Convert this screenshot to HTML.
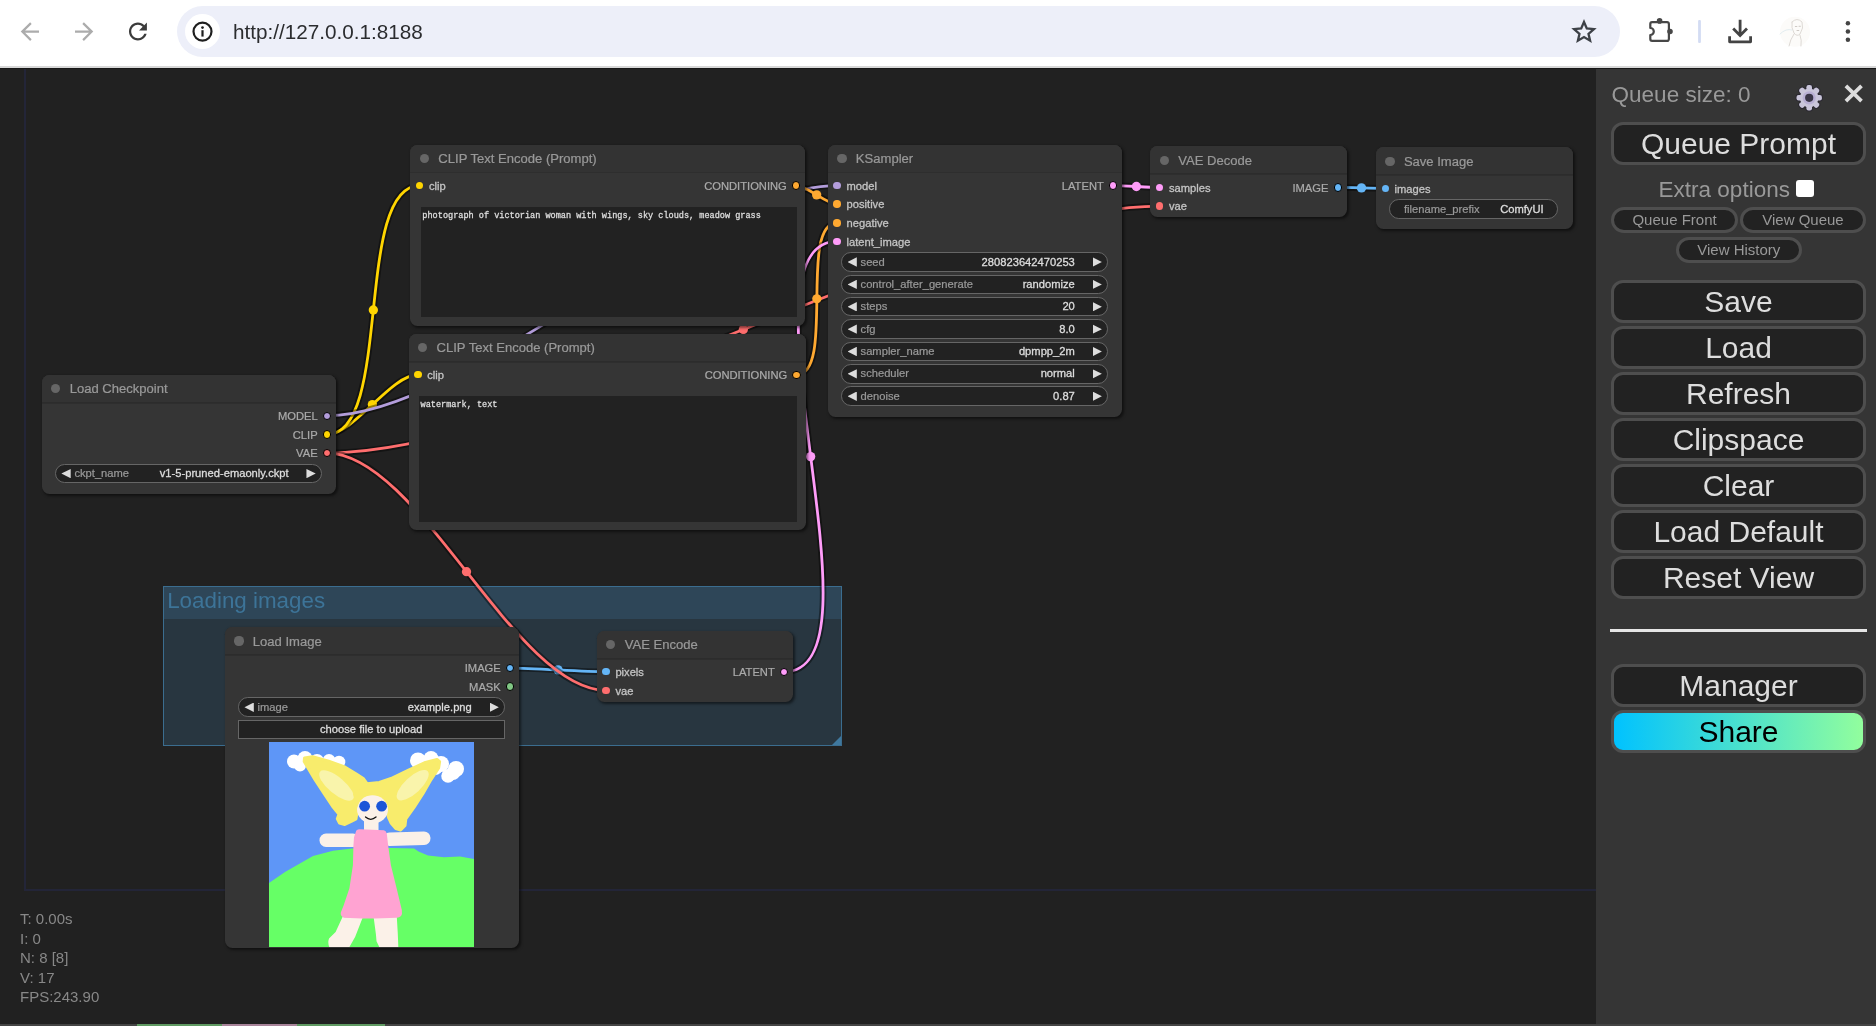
<!DOCTYPE html>
<html lang="en"><head><meta charset="utf-8"><title>ComfyUI</title>
<style>
html,body{margin:0;padding:0}
body{width:1876px;height:1026px;overflow:hidden;position:relative;background:#212121;
 font-family:"Liberation Sans",sans-serif}
.t{position:absolute;white-space:nowrap;line-height:1;display:block}
i{display:block;position:absolute;font-style:normal}
/* ---------- browser chrome ---------- */
#chrome{position:absolute;left:0;top:0;width:1876px;height:66px;background:#fff;border-bottom:2px solid #d8d8d8;box-shadow:0 1px 0 #171717;z-index:30}
#omni{position:absolute;left:177px;top:6px;width:1443px;height:51px;border-radius:26px;background:#edeff9}
#omni .site{position:absolute;left:8px;top:8px;width:35px;height:35px;border-radius:50%;background:#fff}
#chrome svg{position:absolute;overflow:visible}
#url{position:absolute;left:56.2px;top:15.700px;font-size:20.7px;line-height:1;color:#2b2c2f;white-space:nowrap;will-change:transform}
/* ---------- canvas ---------- */
#graph{position:absolute;left:0;top:68px;width:1876px;height:958px;overflow:hidden;background:#212121}
#world{position:absolute;left:0;top:-68px;width:1876px;height:1026px;will-change:transform}
#world .t{-webkit-text-stroke:0.22px currentColor}
#world .v{-webkit-text-stroke:0.3px currentColor}
#world .gt{-webkit-text-stroke:0}
#links{position:absolute;left:0;top:0;overflow:visible}
.edge{position:absolute;background:#232538}
.group{position:absolute;box-sizing:border-box;border:0.93px solid rgba(63,120,158,.85);background:rgba(63,120,158,.25)}
.ghead{position:absolute;left:0;top:0;right:0;background:rgba(63,120,158,.25)}
.gcorner{right:0;bottom:0;width:0;height:0;border-style:solid;border-color:transparent transparent #3f789e transparent}
.node{position:absolute;background:#353535;border-radius:7.46px;box-shadow:1.86px 1.86px 2.8px rgba(0,0,0,.5)}
.node header{position:absolute;left:0;top:0;right:0;background:#333;border-radius:7.46px 7.46px 0 0}
.tdot{left:9.32px;top:9.32px;width:9.32px;height:9.32px;border-radius:50%;background:#666}
.sep{left:0;right:0;height:1.86px;background:rgba(0,0,0,.13)}
.sd{width:7.46px;height:7.46px;border-radius:50%}
.so{box-sizing:border-box;width:8.39px;height:8.39px;border:0.93px solid #000}
.w{position:absolute;box-sizing:border-box;border:0.93px solid #666;background:#222;border-radius:9.8px}
.w.btn{border-radius:0}
.al,.ar{top:4.2px;width:9.32px;height:9.32px;background:#ddd}
.al{left:5.1px;clip-path:polygon(100% 0,0 50%,100% 100%)}
.ar{right:5.1px;clip-path:polygon(0 0,100% 50%,0 100%)}
.ta{position:absolute;box-sizing:border-box;background:#222;color:#ddd;-webkit-text-stroke:0.3px #ddd;font-family:"Liberation Mono",monospace;
 font-size:8.55px;line-height:11px;padding:4.1px 0 0 1.7px;white-space:nowrap;overflow:hidden}
.pic{position:absolute;display:block}
#stats{position:absolute;left:20px;top:909.4px;font-size:15px;line-height:19.47px;color:#888;white-space:nowrap}
#strip{position:absolute;left:0;top:1024px;width:1876px;height:2px;background:#444;z-index:25}
#strip i{top:0;height:2px}
/* ---------- side menu ---------- */
#menu{position:absolute;left:1596px;top:68px;width:280px;height:958px;background:#353535;z-index:20;color:#999}
#menu button{position:absolute;box-sizing:border-box;margin:0;padding:0;font-family:"Liberation Sans",sans-serif;
 background:#222;color:#ddd;border:3px solid #4e4e4e;border-radius:12px;font-size:30px;line-height:34px;text-align:center;
 left:15px;width:255px;height:43px}
#menu button.sm{font-size:15px;line-height:20px;height:26px;color:#999;border-width:3px;border-radius:13px}
#menu hr{position:absolute;left:14px;top:561.2px;width:257px;height:2.400px;margin:0;border:0;background:#e6e6e6}
#menu svg{position:absolute;overflow:visible}
#mi{position:absolute;left:0;top:0;width:280px;height:958px;will-change:transform}
</style></head>
<body>
<div id="chrome">
<svg width="1876" height="66" viewBox="0 0 1876 66" fill="none">
 <g stroke="#acacac" stroke-width="2.2" stroke-linecap="butt" stroke-linejoin="miter">
  <path d="M39 31.6H22.6M30.9 23.1L22.3 31.6L30.9 40.1"/>
  <path d="M75 31.6H91.4M83.1 23.1L91.7 31.6L83.1 40.1"/>
 </g>
 <path transform="translate(124.5 18.1) scale(1.12)" fill="#3b3b3b" d="M17.65 6.35C16.2 4.9 14.21 4 12 4c-4.42 0-7.99 3.58-7.99 8s3.57 8 7.99 8c3.73 0 6.84-2.55 7.73-6h-2.08c-.82 2.33-3.04 4-5.65 4-3.31 0-6-2.69-6-6s2.69-6 6-6c1.66 0 3.14.69 4.22 1.78L13 11h7V4l-2.35 2.35z"/>
</svg>
<div id="omni"><span class="site"></span>
 <svg width="1443" height="51" viewBox="177 6 1443 51" style="left:0;top:0" fill="none">
  <circle cx="202.5" cy="31.6" r="9" stroke="#1f1f1f" stroke-width="2.2"/>
  <circle cx="202.5" cy="27.6" r="1.35" fill="#1f1f1f"/>
  <path d="M202.5 30.2V36.6" stroke="#1f1f1f" stroke-width="2.2"/>
  <path stroke="#3d4147" stroke-width="2.3" stroke-linejoin="miter" d="M1584 22L1586.8 28.500L1593.9 29.1L1588.5 33.8L1590.1 40.7L1584 37L1577.9 40.7L1579.5 33.8L1574.1 29.1L1581.2 28.5Z"/>
 </svg>
 <span id="url">http://127.0.0.1:8188</span>
</div>
<svg width="1876" height="66" viewBox="0 0 1876 66" fill="none">
 <g stroke="#474747" stroke-width="2.2" stroke-linejoin="round">
  <path d="M1652.1 22.1H1667.1A1.8 1.8 0 0 1 1668.9 23.9V39.100A1.8 1.8 0 0 1 1667.1 40.9H1652.1A1.8 1.8 0 0 1 1650.300 39.1V35A3.5 3.5 0 0 0 1650.3 28V23.9A1.8 1.8 0 0 1 1652.1 22.1Z"/>
  <circle cx="1659.6" cy="20.9" r="1.7" fill="#474747"/><circle cx="1670" cy="31.5" r="1.7" fill="#474747"/>
 </g>
 <rect x="1698.1" y="20" width="2.8" height="23" rx="1" fill="#d3dcf3"/>
 <g stroke="#444" stroke-width="2.8" stroke-linejoin="miter">
  <path d="M1729.6 36.300V41.8H1750.6V36.3" stroke-linejoin="round"/>
  <path d="M1740.1 19.7V35.400M1733.2 28.6L1740.1 35.6L1747 28.6"/>
 </g>
 <circle cx="1795" cy="31.8" r="15" fill="#fcfbf9"/>
 <g stroke="#d9d5d0" stroke-width="0.9" stroke-linecap="round">
  <path d="M1792 22Q1797 17 1802 22Q1804 28 1800 34Q1797 37 1794 33Q1791 28 1792 22"/>
  <path d="M1794 34Q1790 40 1789 46M1800 35Q1802 40 1801 46"/>
  <path d="M1780 34Q1786 28 1792 30" stroke="#dfeaee"/>
  <path d="M1795.300 26.5h1.6M1799 26.3h1.400M1797 30.5h1.8" stroke="#c9c4be"/>
 </g>
 <g fill="#444"><circle cx="1847.9" cy="23.2" r="2.25"/><circle cx="1847.9" cy="31.5" r="2.25"/><circle cx="1847.9" cy="39.7" r="2.25"/></g>
</svg>
</div>
<div id="graph"><div id="world">
<i class="edge" style="left:24px;top:0;width:1.6px;height:890.6px"></i>
<i class="edge" style="left:24px;top:889.4px;width:1600px;height:1.6px"></i>
<div class="group" style="left:163.4px;top:586.31px;width:678.13px;height:159.77px"><div class="ghead" style="height:31.32px"></div><span class="t gt" style="left:2.8px;top:2.43px;font-size:22.37px;color:#3d7498">Loading images</span><i class="gcorner" style="border-width:0 0 9.32px 9.32px"></i></div>
<svg id="links" width="1876" height="1026" viewBox="0 0 1876 1026" fill="none" stroke-linecap="butt" stroke-linejoin="round">
<path d="M326.97 434.39C354.14 434.39 390.66 374.75 417.84 374.75" stroke="rgba(0,0,0,.42)" stroke-width="6.52"/>
<path d="M326.97 434.39C354.14 434.39 390.66 374.75 417.84 374.75" stroke="#FFD500" stroke-width="2.8"/>
<circle cx="372.4" cy="404.57" r="4.66" fill="#FFD500"/>
<path d="M326.97 434.39C393.36 434.39 353.31 185.55 419.7 185.55" stroke="rgba(0,0,0,.42)" stroke-width="6.52"/>
<path d="M326.97 434.39C393.36 434.39 353.31 185.55 419.7 185.55" stroke="#FFD500" stroke-width="2.8"/>
<circle cx="373.33" cy="309.97" r="4.66" fill="#FFD500"/>
<path d="M1113.11 185.55C1124.77 185.55 1148.05 187.41 1159.71 187.41" stroke="rgba(0,0,0,.42)" stroke-width="6.52"/>
<path d="M1113.11 185.55C1124.77 185.55 1148.05 187.41 1159.71 187.41" stroke="#FF9CF9" stroke-width="2.8"/>
<circle cx="1136.41" cy="186.48" r="4.66" fill="#FF9CF9"/>
<path d="M326.97 453.03C544.11 453.03 942.56 206.05 1159.71 206.05" stroke="rgba(0,0,0,.42)" stroke-width="6.52"/>
<path d="M326.97 453.03C544.11 453.03 942.56 206.05 1159.71 206.05" stroke="#FF6E6E" stroke-width="2.8"/>
<circle cx="743.34" cy="329.54" r="4.66" fill="#FF6E6E"/>
<path d="M1337.72 187.41C1349.61 187.41 1373.37 188.35 1385.25 188.35" stroke="rgba(0,0,0,.42)" stroke-width="6.52"/>
<path d="M1337.72 187.41C1349.61 187.41 1373.37 188.35 1385.25 188.35" stroke="#64B5F6" stroke-width="2.8"/>
<circle cx="1361.49" cy="187.88" r="4.66" fill="#64B5F6"/>
<path d="M510.09 668.03C534.1 668.03 582.06 671.76 606.08 671.76" stroke="rgba(0,0,0,.42)" stroke-width="6.52"/>
<path d="M510.09 668.03C534.1 668.03 582.06 671.76 606.08 671.76" stroke="#64B5F6" stroke-width="2.8"/>
<circle cx="558.08" cy="669.89" r="4.66" fill="#64B5F6"/>
<path d="M326.97 453.03C418.56 453.03 514.48 690.4 606.08 690.4" stroke="rgba(0,0,0,.42)" stroke-width="6.52"/>
<path d="M326.97 453.03C418.56 453.03 514.48 690.4 606.08 690.4" stroke="#FF6E6E" stroke-width="2.8"/>
<circle cx="466.52" cy="571.71" r="4.66" fill="#FF6E6E"/>
<path d="M326.97 415.75C466.91 415.75 697.29 185.55 837.24 185.55" stroke="rgba(0,0,0,.42)" stroke-width="6.52"/>
<path d="M326.97 415.75C466.91 415.75 697.29 185.55 837.24 185.55" stroke="#B39DDB" stroke-width="2.8"/>
<circle cx="582.1" cy="300.65" r="4.66" fill="#B39DDB"/>
<path d="M796.09 185.55C807.38 185.55 825.94 204.19 837.24 204.19" stroke="rgba(0,0,0,.42)" stroke-width="6.52"/>
<path d="M796.09 185.55C807.38 185.55 825.94 204.19 837.24 204.19" stroke="#FFA931" stroke-width="2.8"/>
<circle cx="816.66" cy="194.87" r="4.66" fill="#FFA931"/>
<path d="M796.49 374.75C835.81 374.75 797.91 222.83 837.24 222.83" stroke="rgba(0,0,0,.42)" stroke-width="6.52"/>
<path d="M796.49 374.75C835.81 374.75 797.91 222.83 837.24 222.83" stroke="#FFA931" stroke-width="2.8"/>
<circle cx="816.86" cy="298.79" r="4.66" fill="#FFA931"/>
<path d="M784.09 671.76C892.48 671.76 728.85 241.47 837.24 241.47" stroke="rgba(0,0,0,.42)" stroke-width="6.52"/>
<path d="M784.09 671.76C892.48 671.76 728.85 241.47 837.24 241.47" stroke="#FF9CF9" stroke-width="2.8"/>
<circle cx="810.66" cy="456.61" r="4.66" fill="#FF9CF9"/>
</svg>
<section class="node" style="left:408.52px;top:333.74px;width:397.29px;height:196.29px">
<header style="height:27.96px"><i class="tdot"></i><span class="t " style="left:27.96px;top:7.59px;font-size:13.05px;color:#999;">CLIP Text Encode (Prompt)</span></header>
<i class="sep" style="top:27.03px"></i>
<i class="sd" style="left:5.59px;top:37.28px;background:#FFD500"></i>
<span class="t v" style="left:18.64px;top:36.2px;font-size:11.18px;color:#c4c4c4;">clip</span>
<i class="sd so" style="left:383.78px;top:36.81px;background:#FFA931"></i>
<span class="t " style="right:18.64px;top:36.2px;font-size:11.18px;color:#aaa;">CONDITIONING</span>
<div class="ta" style="left:10.3px;top:62.44px;width:378.39px;height:125.64px">watermark, text</div>
</section>
<section class="node" style="left:410.38px;top:144.54px;width:395.03px;height:181.1px">
<header style="height:27.96px"><i class="tdot"></i><span class="t " style="left:27.96px;top:7.59px;font-size:13.05px;color:#999;">CLIP Text Encode (Prompt)</span></header>
<i class="sep" style="top:27.03px"></i>
<i class="sd" style="left:5.59px;top:37.28px;background:#FFD500"></i>
<span class="t v" style="left:18.64px;top:36.2px;font-size:11.18px;color:#c4c4c4;">clip</span>
<i class="sd so" style="left:381.51px;top:36.81px;background:#FFA931"></i>
<span class="t " style="right:18.64px;top:36.2px;font-size:11.18px;color:#aaa;">CONDITIONING</span>
<div class="ta" style="left:10.3px;top:62.44px;width:376.13px;height:110.45px">photograph of victorian woman with wings, sky clouds, meadow grass</div>
</section>
<section class="node" style="left:1150.39px;top:146.41px;width:196.65px;height:70.83px">
<header style="height:27.96px"><i class="tdot"></i><span class="t " style="left:27.96px;top:7.59px;font-size:13.05px;color:#999;">VAE Decode</span></header>
<i class="sep" style="top:27.03px"></i>
<i class="sd" style="left:5.59px;top:37.28px;background:#FF9CF9"></i>
<span class="t v" style="left:18.64px;top:36.2px;font-size:11.18px;color:#c4c4c4;">samples</span>
<i class="sd" style="left:5.59px;top:55.92px;background:#FF6E6E"></i>
<span class="t v" style="left:18.64px;top:54.84px;font-size:11.18px;color:#c4c4c4;">vae</span>
<i class="sd so" style="left:183.14px;top:36.81px;background:#64B5F6"></i>
<span class="t " style="right:18.64px;top:36.2px;font-size:11.18px;color:#aaa;">IMAGE</span>
</section>
<section class="node" style="left:1375.93px;top:147.34px;width:196.65px;height:82.02px">
<header style="height:27.96px"><i class="tdot"></i><span class="t " style="left:27.96px;top:7.59px;font-size:13.05px;color:#999;">Save Image</span></header>
<i class="sep" style="top:27.03px"></i>
<i class="sd" style="left:5.59px;top:37.28px;background:#64B5F6"></i>
<span class="t v" style="left:18.64px;top:36.2px;font-size:11.18px;color:#c4c4c4;">images</span>
<div class="w" style="left:13.51px;top:51.73px;width:168.69px;height:19.57px"><span class="t " style="left:13.51px;top:3.46px;font-size:11.18px;color:#999;">filename_prefix</span><span class="t v" style="right:13.51px;top:3.46px;font-size:11.18px;color:#ddd;">ComfyUI</span></div>
</section>
<section class="node" style="left:224.89px;top:627.02px;width:294.51px;height:320.61px">
<header style="height:27.96px"><i class="tdot"></i><span class="t " style="left:27.96px;top:7.59px;font-size:13.05px;color:#999;">Load Image</span></header>
<i class="sep" style="top:27.03px"></i>
<i class="sd so" style="left:281px;top:36.81px;background:#64B5F6"></i>
<span class="t " style="right:18.64px;top:36.2px;font-size:11.18px;color:#aaa;">IMAGE</span>
<i class="sd so" style="left:281px;top:55.45px;background:#81C784"></i>
<span class="t " style="right:18.64px;top:54.84px;font-size:11.18px;color:#aaa;">MASK</span>
<div class="w" style="left:13.51px;top:70.37px;width:266.55px;height:19.57px"><i class="al"></i><i class="ar"></i><span class="t " style="left:18.17px;top:3.46px;font-size:11.18px;color:#999;">image</span><span class="t v" style="right:32.15px;top:3.46px;font-size:11.18px;color:#ddd;">example.png</span></div>
<div class="w btn" style="left:13.51px;top:92.73px;width:266.55px;height:19.57px"><span class="t v" style="left:131.88px;transform:translateX(-50%);top:3.46px;font-size:11.18px;color:#ddd;">choose file to upload</span></div>
<svg class="pic" style="left:43.97px;top:114.77px" width="205.04" height="205.04" viewBox="0 0 205 205">
<rect width="205" height="205" fill="#5e96f7"/>
<g fill="#fff">
<circle cx="25" cy="19.5" r="7"/><circle cx="36" cy="16.5" r="7.5"/><circle cx="31" cy="23.5" r="6"/>
<circle cx="48" cy="19" r="7"/><circle cx="60" cy="18.500" r="6.5"/><circle cx="70" cy="20" r="6.3"/><circle cx="64" cy="22" r="5"/>
<circle cx="149" cy="18.500" r="8"/><circle cx="162" cy="16.5" r="7.500"/><circle cx="172" cy="22" r="8"/>
<circle cx="187" cy="27" r="8"/><circle cx="179" cy="34" r="6.8"/><circle cx="184" cy="31" r="7"/><circle cx="166" cy="25" r="8"/>
</g>
<path fill="#66ff66" d="M0 141 L16 130 L30 122 L44 114 L64 108.8 L83 106.5 L122 106 L145 106.5 L149.5 109.4 L159 113.4 L175 115.2 L191 114.6 L205 117 V205 H0Z"/>
<path fill="#f8ec6c" stroke="#f8ec6c" stroke-width="3" stroke-linejoin="round" d="M35.5 16 L43.6 14.8 L59.7 19.2 L75.8 25 L87.3 32 L94.2 36.5 L98 41.7 L110.3 40.5 L122 36.5 L139 28.4 L156.4 20.4 L168 17.5 L170.6 19.6 L169.6 26 L162 37.6 L154 51.5 L145 65.3 L136.8 76.8 L136 83.5 L131.6 88 L126.8 86.6 L122 81 L119.6 75.6 L118 70 L88 70 L87 76.8 L82.7 79.1 L75.8 82.5 L70.5 81 L68.3 76.8 L70 72.2 L64.3 65.3 L55 51.5 L46 37.6 L39 26 L35.2 19.4Z"/>
<ellipse cx="67.5" cy="43.5" rx="21.5" ry="8.2" fill="#f9f4ab" transform="rotate(40 67.5 43.5)"/>
<ellipse cx="143.7" cy="43.2" rx="20.5" ry="8.2" fill="#f9f4ab" transform="rotate(-43 143.7 43.2)"/>
<ellipse cx="103.5" cy="67.5" rx="15.5" ry="14.2" fill="#fbf1e8"/>
<path fill="#f8ec6c" d="M88 66 Q92 52 103.5 53 Q116 52 120 66 L122 50 L100 42 L84 52Z"/>
<rect x="95" y="76" width="14.5" height="14" fill="#fbf1e8"/>
<rect x="50.5" y="91.5" width="40" height="13.5" rx="6.5" fill="#fbf1e8"/>
<rect x="114" y="90" width="47.5" height="13.5" rx="6.5" fill="#fbf1e8" transform="rotate(-1.5 137 97)"/>
<circle cx="95.6" cy="64.2" r="5.4" fill="#1b55d8"/><circle cx="112.6" cy="64.2" r="5.4" fill="#1b55d8"/>
<path d="M96.5 75 Q101.7 79.6 107 75" fill="none" stroke="#111" stroke-width="1.3" stroke-linecap="round"/>
<path fill="#fbf1e8" d="M73.5 175 L66.6 190 L60 196.5 Q58.5 201 60.3 205 L80.4 205 L86.2 194.6 L93.5 176Z"/>
<path fill="#fbf1e8" d="M104.6 175 L106.9 192.3 L107.5 199.2 L110.3 205 L129.3 205 L128.8 192.3 L127.8 175Z"/>
<path fill="#ffa3d2" d="M87.3 88.6 Q89 87 91 87.2 L114.9 88.3 Q117.5 89 117.8 91.8 L119.2 104 L121.9 123.2 L127.6 146.3 L132.8 168 Q133.5 172 132 174 Q130 176 127.6 175.8 L105.7 176.4 L93 176.4 L75 175.6 Q71 174 71.8 170.4 L74.6 163.5 L80.4 146.3 L83.9 123.2 L84.4 104 L85 95.2Z"/>
</svg>
</section>
<section class="node" style="left:596.76px;top:630.75px;width:196.65px;height:70.83px">
<header style="height:27.96px"><i class="tdot"></i><span class="t " style="left:27.96px;top:7.59px;font-size:13.05px;color:#999;">VAE Encode</span></header>
<i class="sep" style="top:27.03px"></i>
<i class="sd" style="left:5.59px;top:37.28px;background:#64B5F6"></i>
<span class="t v" style="left:18.64px;top:36.2px;font-size:11.18px;color:#c4c4c4;">pixels</span>
<i class="sd" style="left:5.59px;top:55.92px;background:#FF6E6E"></i>
<span class="t v" style="left:18.64px;top:54.84px;font-size:11.18px;color:#c4c4c4;">vae</span>
<i class="sd so" style="left:183.14px;top:36.81px;background:#FF9CF9"></i>
<span class="t " style="right:18.64px;top:36.2px;font-size:11.18px;color:#aaa;">LATENT</span>
</section>
<section class="node" style="left:827.92px;top:144.54px;width:294.51px;height:272.14px">
<header style="height:27.96px"><i class="tdot"></i><span class="t " style="left:27.96px;top:7.59px;font-size:13.05px;color:#999;">KSampler</span></header>
<i class="sep" style="top:27.03px"></i>
<i class="sd" style="left:5.59px;top:37.28px;background:#B39DDB"></i>
<span class="t v" style="left:18.64px;top:36.2px;font-size:11.18px;color:#c4c4c4;">model</span>
<i class="sd" style="left:5.59px;top:55.92px;background:#FFA931"></i>
<span class="t v" style="left:18.64px;top:54.84px;font-size:11.18px;color:#c4c4c4;">positive</span>
<i class="sd" style="left:5.59px;top:74.56px;background:#FFA931"></i>
<span class="t v" style="left:18.64px;top:73.48px;font-size:11.18px;color:#c4c4c4;">negative</span>
<i class="sd" style="left:5.59px;top:93.2px;background:#FF9CF9"></i>
<span class="t v" style="left:18.64px;top:92.12px;font-size:11.18px;color:#c4c4c4;">latent_image</span>
<i class="sd so" style="left:281px;top:36.81px;background:#FF9CF9"></i>
<span class="t " style="right:18.64px;top:36.2px;font-size:11.18px;color:#aaa;">LATENT</span>
<div class="w" style="left:13.51px;top:107.65px;width:266.55px;height:19.57px"><i class="al"></i><i class="ar"></i><span class="t " style="left:18.17px;top:3.46px;font-size:11.18px;color:#999;">seed</span><span class="t v" style="right:32.15px;top:3.46px;font-size:11.18px;color:#ddd;">280823642470253</span></div>
<div class="w" style="left:13.51px;top:130.01px;width:266.55px;height:19.57px"><i class="al"></i><i class="ar"></i><span class="t " style="left:18.17px;top:3.46px;font-size:11.18px;color:#999;">control_after_generate</span><span class="t v" style="right:32.15px;top:3.46px;font-size:11.18px;color:#ddd;">randomize</span></div>
<div class="w" style="left:13.51px;top:152.38px;width:266.55px;height:19.57px"><i class="al"></i><i class="ar"></i><span class="t " style="left:18.17px;top:3.46px;font-size:11.18px;color:#999;">steps</span><span class="t v" style="right:32.15px;top:3.46px;font-size:11.18px;color:#ddd;">20</span></div>
<div class="w" style="left:13.51px;top:174.75px;width:266.55px;height:19.57px"><i class="al"></i><i class="ar"></i><span class="t " style="left:18.17px;top:3.46px;font-size:11.18px;color:#999;">cfg</span><span class="t v" style="right:32.15px;top:3.46px;font-size:11.18px;color:#ddd;">8.0</span></div>
<div class="w" style="left:13.51px;top:197.12px;width:266.55px;height:19.57px"><i class="al"></i><i class="ar"></i><span class="t " style="left:18.17px;top:3.46px;font-size:11.18px;color:#999;">sampler_name</span><span class="t v" style="right:32.15px;top:3.46px;font-size:11.18px;color:#ddd;">dpmpp_2m</span></div>
<div class="w" style="left:13.51px;top:219.49px;width:266.55px;height:19.57px"><i class="al"></i><i class="ar"></i><span class="t " style="left:18.17px;top:3.46px;font-size:11.18px;color:#999;">scheduler</span><span class="t v" style="right:32.15px;top:3.46px;font-size:11.18px;color:#ddd;">normal</span></div>
<div class="w" style="left:13.51px;top:241.85px;width:266.55px;height:19.57px"><i class="al"></i><i class="ar"></i><span class="t " style="left:18.17px;top:3.46px;font-size:11.18px;color:#999;">denoise</span><span class="t v" style="right:32.15px;top:3.46px;font-size:11.18px;color:#ddd;">0.87</span></div>
</section>
<section class="node" style="left:41.77px;top:374.75px;width:294.51px;height:119.3px">
<header style="height:27.96px"><i class="tdot"></i><span class="t " style="left:27.96px;top:7.59px;font-size:13.05px;color:#999;">Load Checkpoint</span></header>
<i class="sep" style="top:27.03px"></i>
<i class="sd so" style="left:281px;top:36.81px;background:#B39DDB"></i>
<span class="t " style="right:18.64px;top:36.2px;font-size:11.18px;color:#aaa;">MODEL</span>
<i class="sd so" style="left:281px;top:55.45px;background:#FFD500"></i>
<span class="t " style="right:18.64px;top:54.84px;font-size:11.18px;color:#aaa;">CLIP</span>
<i class="sd so" style="left:281px;top:74.09px;background:#FF6E6E"></i>
<span class="t " style="right:18.64px;top:73.48px;font-size:11.18px;color:#aaa;">VAE</span>
<div class="w" style="left:13.51px;top:89.01px;width:266.55px;height:19.57px"><i class="al"></i><i class="ar"></i><span class="t " style="left:18.17px;top:3.46px;font-size:11.18px;color:#999;">ckpt_name</span><span class="t v" style="right:32.15px;top:3.46px;font-size:11.18px;color:#ddd;">v1-5-pruned-emaonly.ckpt</span></div>
</section>
<div id="stats">T: 0.00s<br>I: 0<br>N: 8 [8]<br>V: 17<br>FPS:243.90</div>
</div></div>
<div id="menu"><div id="mi">
<span class="t " style="left:15.6px;top:15.65px;font-size:22.5px;color:#999;">Queue size: 0</span>
<svg width="280" height="60" viewBox="0 0 280 60" style="left:0;top:0"><g fill="#26232f" stroke="#26232f" stroke-width="1.8" opacity=".75"><rect x="210.4" y="17.1" width="5.6" height="8" rx="2.1" transform="rotate(0 213.2 29.8)"/><rect x="210.4" y="17.1" width="5.6" height="8" rx="2.1" transform="rotate(45 213.2 29.8)"/><rect x="210.4" y="17.1" width="5.6" height="8" rx="2.1" transform="rotate(90 213.2 29.8)"/><rect x="210.4" y="17.1" width="5.6" height="8" rx="2.1" transform="rotate(135 213.2 29.8)"/><rect x="210.4" y="17.1" width="5.6" height="8" rx="2.1" transform="rotate(180 213.2 29.8)"/><rect x="210.4" y="17.1" width="5.6" height="8" rx="2.1" transform="rotate(225 213.2 29.8)"/><rect x="210.4" y="17.1" width="5.6" height="8" rx="2.1" transform="rotate(270 213.2 29.8)"/><rect x="210.4" y="17.1" width="5.6" height="8" rx="2.1" transform="rotate(315 213.2 29.8)"/><circle cx="213.2" cy="29.8" r="9.300"/></g><g fill="#c9c5da"><rect x="210.4" y="17.1" width="5.6" height="8" rx="2.1" transform="rotate(0 213.2 29.8)"/><rect x="210.4" y="17.1" width="5.6" height="8" rx="2.1" transform="rotate(45 213.2 29.8)"/><rect x="210.4" y="17.1" width="5.6" height="8" rx="2.1" transform="rotate(90 213.2 29.8)"/><rect x="210.4" y="17.1" width="5.6" height="8" rx="2.1" transform="rotate(135 213.2 29.8)"/><rect x="210.4" y="17.1" width="5.6" height="8" rx="2.1" transform="rotate(180 213.2 29.8)"/><rect x="210.4" y="17.1" width="5.6" height="8" rx="2.1" transform="rotate(225 213.2 29.8)"/><rect x="210.4" y="17.1" width="5.6" height="8" rx="2.1" transform="rotate(270 213.2 29.8)"/><rect x="210.4" y="17.1" width="5.6" height="8" rx="2.1" transform="rotate(315 213.2 29.8)"/><circle cx="213.2" cy="29.8" r="9.300"/></g><circle cx="213.2" cy="29.8" r="6.600" fill="#b8afd4"/><circle cx="213.2" cy="29.8" r="4.1" fill="#393547"/><path d="M249.9 17.9L265.5 33.100M265.5 17.900L249.9 33.1" stroke="#ddd" stroke-width="3.8"/></svg>
<button class="" style="top:54px;">Queue Prompt</button>
<span class="t " style="left:62.6px;top:111.15px;font-size:22.5px;color:#999;">Extra options</span>
<i style="left:200px;top:111.500px;width:17.6px;height:17px;border-radius:3px;background:#fff"></i>
<button class="sm" style="top:139.4px;left:15.300px;width:126.5px">Queue Front</button>
<button class="sm" style="top:139.4px;left:144.2px;width:125.6px">View Queue</button>
<button class="sm" style="top:168.6px;left:80px;width:125.6px">View History</button>
<button class="" style="top:212px;">Save</button>
<button class="" style="top:258px;">Load</button>
<button class="" style="top:304px;">Refresh</button>
<button class="" style="top:350px;">Clipspace</button>
<button class="" style="top:396px;">Clear</button>
<button class="" style="top:442px;">Load Default</button>
<button class="" style="top:488px;">Reset View</button>
<hr>
<button class="" style="top:596.4px;">Manager</button>
<button class="" style="top:642.2px;background:linear-gradient(90deg,#00C2FF 0%,#92FE9D 100%);color:#000">Share</button>
</div></div>
<div id="strip"><i style="left:137px;width:85px;background:#5f9a62"></i><i style="left:222px;width:75px;background:#a8849a"></i><i style="left:297px;width:88px;background:#5f9a62"></i></div>
</body></html>
